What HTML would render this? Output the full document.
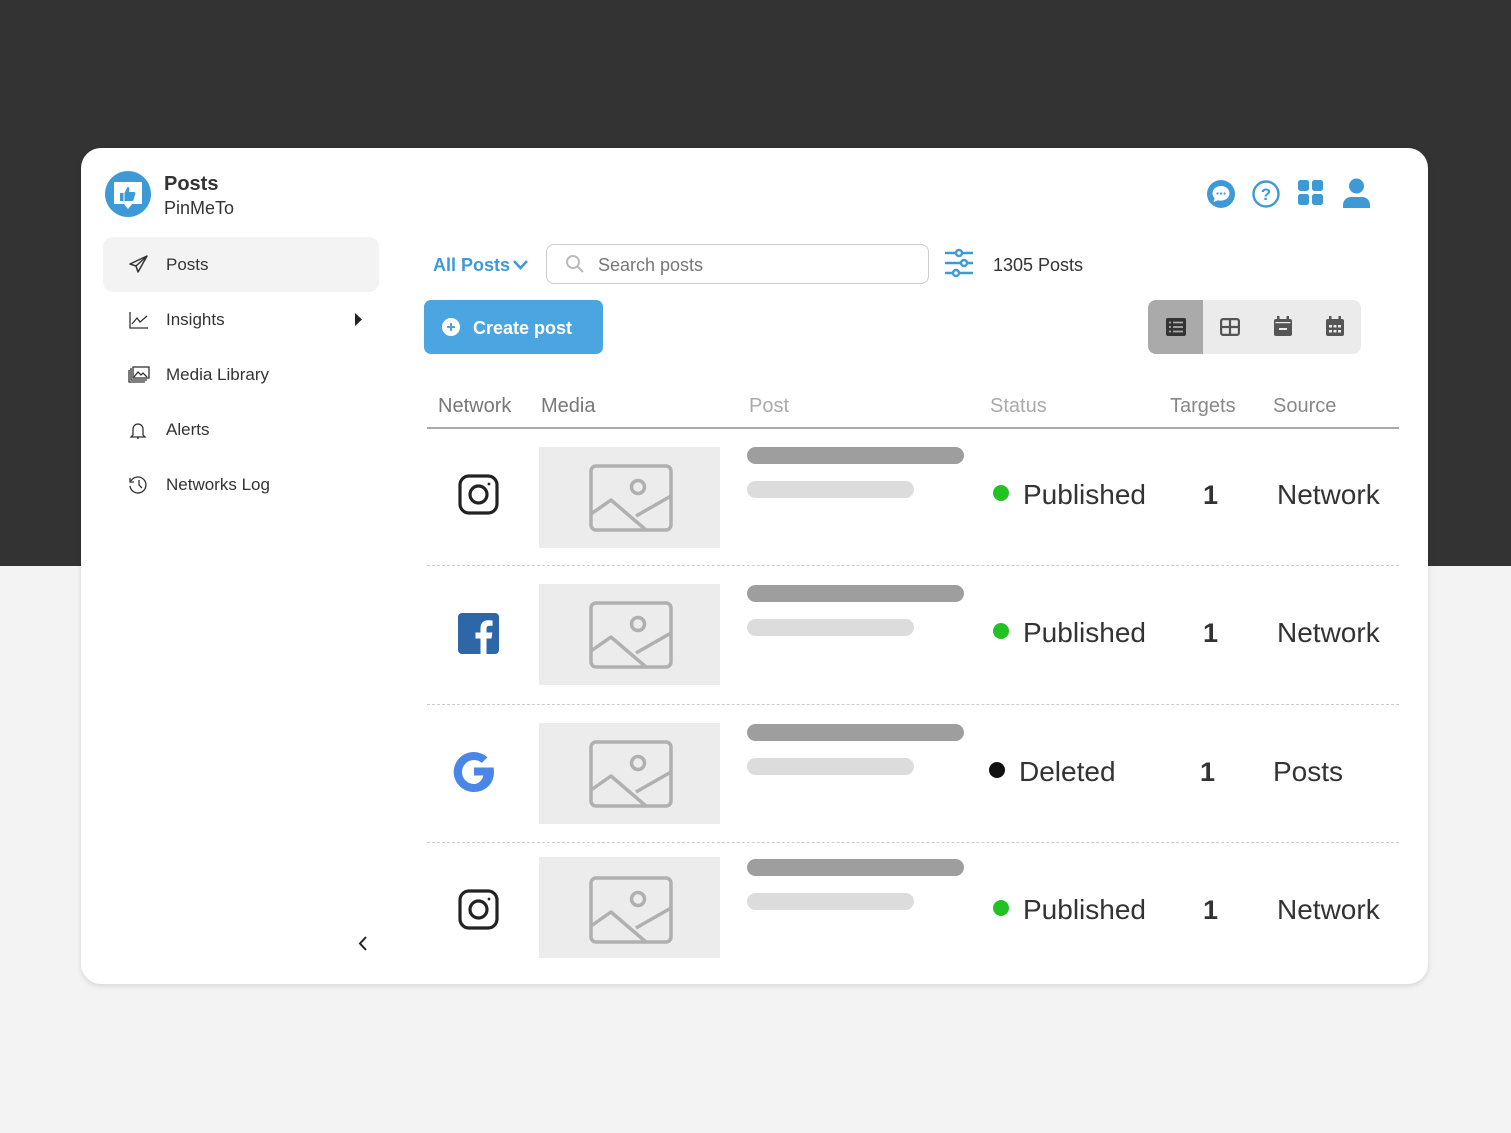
<!DOCTYPE html>
<html><head><meta charset="utf-8"><style>
*{margin:0;padding:0;box-sizing:border-box}
body{width:1511px;height:1133px;background:#f3f3f3;position:relative;overflow:hidden;font-family:"Liberation Sans",sans-serif;color:#333}
.top{position:absolute;left:0;top:0;width:1511px;height:566px;background:#333}
.card{position:absolute;left:81px;top:148px;width:1347px;height:836px;background:#fff;border-radius:20px;box-shadow:0 2px 6px rgba(0,0,0,.12)}
.a{position:absolute}
.nav{position:absolute;left:166px;font-size:17px;color:#333}
.navic{position:absolute;left:128px}
.th{position:absolute;top:395px;font-size:20px}
.img{position:absolute;left:539px;width:181px;height:101px;background:#ececec}
.b1{position:absolute;left:747px;width:217px;height:17px;border-radius:9px;background:#9e9e9e}
.b2{position:absolute;left:747px;width:167px;height:17px;border-radius:9px;background:#dcdcdc}
.st{position:absolute;font-size:28px;color:#333}
.dot{display:inline-block;width:16px;height:16px;border-radius:50%;background:#22c222;margin-right:14px;vertical-align:3px}
.one{position:absolute;left:1203px;font-size:27px;font-weight:bold;color:#333}
.src{position:absolute;font-size:28px;color:#333}
.dash{position:absolute;left:427px;width:972px;border-top:1.5px dashed #ccc}
</style></head><body>
<div class="top"></div>
<div class="card"></div>

<!-- logo -->
<svg class="a" style="left:105px;top:171px" width="46" height="46" viewBox="0 0 46 46"><circle cx="23" cy="23" r="23" fill="#3d9ad6"/><path d="M9 11h28v22H27l-4 5-4-5H9z" fill="#fff"/><path d="M15 22h3.5v8H15zM19.5 22l3-6c1.5 0 2 1 1.8 2.5L24 21H29c1 0 1.6 1 1.3 2l-1.8 6c-.2.6-.8 1-1.4 1h-7.6z" fill="#3d9ad6"/></svg>
<div class="a" style="left:164px;top:173px;font-size:20px;font-weight:bold;color:#333">Posts</div>
<div class="a" style="left:164px;top:198px;font-size:18px;color:#333">PinMeTo</div>

<!-- sidebar -->
<div class="a" style="left:103px;top:237px;width:276px;height:55px;background:#f3f3f3;border-radius:10px"></div>
<svg class="navic" style="top:254px" width="22" height="20" viewBox="0 0 22 20" fill="none" stroke="#333" stroke-width="1.5" stroke-linejoin="round"><path d="M19 2L2 10l6 2 2 6z M8 12L19 2"/></svg>
<div class="nav" style="top:255px">Posts</div>
<svg class="navic" style="top:310px" width="22" height="20" viewBox="0 0 22 20" fill="none" stroke="#333" stroke-width="1.3"><path d="M2 2v16h18M4 14l5-6 3 4 7-6"/></svg>
<div class="nav" style="top:310px">Insights</div>
<svg class="a" style="left:354px;top:313px" width="8" height="13" viewBox="0 0 8 13"><path d="M1 0l7 6.5L1 13z" fill="#222"/></svg>
<svg class="navic" style="top:365px" width="22" height="20" viewBox="0 0 22 20" fill="none" stroke="#333" stroke-width="1.3"><path d="M1 5v12h16"/><path d="M3 3v12h16"/><rect x="5" y="2" width="16" height="11"/><path d="M6 12l4-5 3 3 2-2 4 4"/></svg>
<div class="nav" style="top:365px">Media Library</div>
<svg class="navic" style="top:420px" width="22" height="20" viewBox="0 0 22 20" fill="none" stroke="#333" stroke-width="1.3"><path d="M5 15V9a5 5 0 0110 0v6l2 2H3z M9 18h2"/></svg>
<div class="nav" style="top:420px">Alerts</div>
<svg class="navic" style="top:475px" width="22" height="20" viewBox="0 0 22 20" fill="none" stroke="#333" stroke-width="1.3"><path d="M3 6a8 8 0 11-1 5"/><path d="M2 3v4h4M11 5v5l3 3"/></svg>
<div class="nav" style="top:475px">Networks Log</div>
<svg class="a" style="left:357px;top:936px" width="12" height="15" viewBox="0 0 12 15"><path d="M9 1L3 7.5 9 14" fill="none" stroke="#222" stroke-width="2"/></svg>

<!-- top right icons -->
<svg class="a" style="left:1207px;top:180px" width="28" height="28" viewBox="0 0 28 28"><circle cx="14" cy="14" r="14" fill="#3d9ad6"/><path d="M14 6c5 0 8.5 3.3 8.5 7.3S19 20.6 14 20.6c-1 0-2-.1-3-.4L6.5 22l1.2-3.6C6.3 17 5.5 15.3 5.5 13.3 5.5 9.3 9 6 14 6z" fill="#fff"/><circle cx="10.5" cy="13.5" r="1.1" fill="#3d9ad6"/><circle cx="14" cy="13.5" r="1.1" fill="#3d9ad6"/><circle cx="17.5" cy="13.5" r="1.1" fill="#3d9ad6"/></svg>
<svg class="a" style="left:1252px;top:180px" width="28" height="28" viewBox="0 0 28 28"><circle cx="14" cy="14" r="12.5" fill="none" stroke="#3d9ad6" stroke-width="2.4"/><text x="14" y="20" text-anchor="middle" font-family="Liberation Sans" font-weight="bold" font-size="17" fill="#3d9ad6">?</text></svg>
<svg class="a" style="left:1298px;top:180px" width="26" height="26" viewBox="0 0 26 26" fill="#3d9ad6"><rect x="0" y="0" width="11" height="11" rx="2.5"/><rect x="14" y="0" width="11" height="11" rx="2.5"/><rect x="0" y="14" width="11" height="11" rx="2.5"/><rect x="14" y="14" width="11" height="11" rx="2.5"/></svg>
<svg class="a" style="left:1343px;top:178px" width="27" height="30" viewBox="0 0 27 30" fill="#3d9ad6"><circle cx="13.5" cy="8" r="7.5"/><path d="M0 30v-3c0-5 4-8 8-8h11c4 0 8 3 8 8v3z"/></svg>

<!-- toolbar -->
<div class="a" style="left:433px;top:255px;font-size:18px;font-weight:bold;color:#3d9ad6">All Posts</div>
<svg class="a" style="left:512px;top:259px" width="17" height="12" viewBox="0 0 17 12"><path d="M2 2l6.5 7L15 2" fill="none" stroke="#3d9ad6" stroke-width="2.5"/></svg>
<div class="a" style="left:546px;top:244px;width:383px;height:40px;border:1.5px solid #ccc;border-radius:8px"></div>
<svg class="a" style="left:565px;top:254px" width="20" height="20" viewBox="0 0 20 20" fill="none" stroke="#bbb" stroke-width="2"><circle cx="8" cy="8" r="6"/><path d="M12.5 12.5L18 18"/></svg>
<div class="a" style="left:598px;top:255px;font-size:18px;color:#777">Search posts</div>
<svg class="a" style="left:944px;top:248px" width="30" height="30" viewBox="0 0 30 30" fill="none" stroke="#3d9ad6" stroke-width="2.4"><path d="M1 5h28M1 15h28M1 25h28"/><circle cx="15" cy="5" r="3" fill="#fff"/><circle cx="20" cy="15" r="3" fill="#fff"/><circle cx="12" cy="25" r="3" fill="#fff"/></svg>
<div class="a" style="left:993px;top:255px;font-size:18px;color:#333">1305 Posts</div>

<div class="a" style="left:424px;top:300px;width:179px;height:54px;background:#4aa5e0;border-radius:7px"></div>
<svg class="a" style="left:442px;top:318px" width="18" height="18" viewBox="0 0 18 18"><circle cx="9" cy="9" r="9" fill="#fff"/><path d="M9 5v8M5 9h8" stroke="#4aa5e0" stroke-width="2"/></svg>
<div class="a" style="left:473px;top:318px;font-size:18px;font-weight:bold;color:#fff">Create post</div>

<div class="a" style="left:1148px;top:300px;width:213px;height:54px;background:#ebebeb;border-radius:8px;overflow:hidden"><div style="width:55px;height:54px;background:#aaa"></div></div>
<svg class="a" style="left:1166px;top:318px" width="20" height="18" viewBox="0 0 20 18"><rect width="20" height="18" rx="2" fill="#333"/><path d="M3 4.5h2M7 4.5h10M3 9h2M7 9h10M3 13.5h2M7 13.5h10" stroke="#aaa" stroke-width="1.8"/></svg>
<svg class="a" style="left:1220px;top:318px" width="20" height="18" viewBox="0 0 20 18" fill="none" stroke="#555" stroke-width="2.2"><rect x="1.1" y="1.1" width="17.8" height="15.8" rx="2"/><path d="M10 1v16M1 9h18"/></svg>
<svg class="a" style="left:1274px;top:316px" width="18" height="20" viewBox="0 0 18 20"><rect x="0" y="3" width="18" height="17" rx="2" fill="#555"/><rect x="3" y="0" width="2.5" height="5" fill="#555"/><rect x="12.5" y="0" width="2.5" height="5" fill="#555"/><rect x="1.5" y="6" width="15" height="1.2" fill="#ebebeb"/><rect x="5" y="12" width="8" height="2" fill="#ebebeb"/></svg>
<svg class="a" style="left:1326px;top:316px" width="18" height="20" viewBox="0 0 18 20"><rect x="0" y="3" width="18" height="17" rx="2" fill="#555"/><rect x="3" y="0" width="2.5" height="5" fill="#555"/><rect x="12.5" y="0" width="2.5" height="5" fill="#555"/><g fill="#ebebeb"><rect x="3" y="9" width="3" height="2.5"/><rect x="7.5" y="9" width="3" height="2.5"/><rect x="12" y="9" width="3" height="2.5"/><rect x="3" y="14" width="3" height="2.5"/><rect x="7.5" y="14" width="3" height="2.5"/><rect x="12" y="14" width="3" height="2.5"/></g></svg>

<!-- table header -->
<div class="th" style="left:438px;color:#777">Network</div>
<div class="th" style="left:541px;color:#777">Media</div>
<div class="th" style="left:749px;color:#aaa">Post</div>
<div class="th" style="left:990px;color:#aaa">Status</div>
<div class="th" style="left:1170px;color:#888">Targets</div>
<div class="th" style="left:1273px;color:#888">Source</div>
<div class="a" style="left:427px;top:427px;width:972px;height:1.5px;background:#aaa"></div>
<div class="dash" style="top:565px"></div>
<div class="dash" style="top:704px"></div>
<div class="dash" style="top:842px"></div>

<!-- network icons -->
<svg class="a" style="left:458px;top:474px" width="41" height="41" viewBox="0 0 41 41" fill="none" stroke="#222" stroke-width="3.2"><rect x="2" y="2" width="37" height="37" rx="9"/><circle cx="20.5" cy="20.5" r="8.5"/><circle cx="31" cy="10" r="1.4" fill="#222" stroke="none"/></svg>
<svg class="a" style="left:458px;top:613px" width="41" height="41" viewBox="0 0 41 41"><rect width="41" height="41" rx="4" fill="#2d67a8"/><path d="M28.5 41V25.5h5l.8-6h-5.8v-3.8c0-1.7.5-2.9 3-2.9h3.1V7.5c-.6-.1-2.4-.2-4.5-.2-4.5 0-7.6 2.7-7.6 7.8v4.4h-5v6h5V41z" fill="#fff"/></svg>
<svg class="a" style="left:451px;top:749px" width="46" height="46" viewBox="0 0 46 46"><path d="M39 18.5H23v8h9.5C31 31.5 27.5 35 23 35a12 12 0 110-24c3 0 5.7 1.1 7.8 3l5.6-5.6A20 20 0 1023 43c11 0 20-8 20-20 0-1.5-.1-3-.4-4.5z" fill="#4a86e8"/></svg>
<svg class="a" style="left:458px;top:889px" width="41" height="41" viewBox="0 0 41 41" fill="none" stroke="#222" stroke-width="3.2"><rect x="2" y="2" width="37" height="37" rx="9"/><circle cx="20.5" cy="20.5" r="8.5"/><circle cx="31" cy="10" r="1.4" fill="#222" stroke="none"/></svg>

<!-- rows -->
<div class="img" style="top:447px"></div>
<div class="img" style="top:584px"></div>
<div class="img" style="top:723px"></div>
<div class="img" style="top:857px"></div>
<svg class="a" style="left:589px;top:464px" width="84" height="68" viewBox="0 0 84 68" fill="none" stroke="#b0b0b0" stroke-width="3.5" stroke-linejoin="round"><rect x="2" y="2" width="80" height="64" rx="5"/><circle cx="49" cy="23" r="6.5"/><path d="M2 50l20-14 35 30M47 52l35-20"/></svg>
<svg class="a" style="left:589px;top:601px" width="84" height="68" viewBox="0 0 84 68" fill="none" stroke="#b0b0b0" stroke-width="3.5" stroke-linejoin="round"><rect x="2" y="2" width="80" height="64" rx="5"/><circle cx="49" cy="23" r="6.5"/><path d="M2 50l20-14 35 30M47 52l35-20"/></svg>
<svg class="a" style="left:589px;top:740px" width="84" height="68" viewBox="0 0 84 68" fill="none" stroke="#b0b0b0" stroke-width="3.5" stroke-linejoin="round"><rect x="2" y="2" width="80" height="64" rx="5"/><circle cx="49" cy="23" r="6.5"/><path d="M2 50l20-14 35 30M47 52l35-20"/></svg>
<svg class="a" style="left:589px;top:876px" width="84" height="68" viewBox="0 0 84 68" fill="none" stroke="#b0b0b0" stroke-width="3.5" stroke-linejoin="round"><rect x="2" y="2" width="80" height="64" rx="5"/><circle cx="49" cy="23" r="6.5"/><path d="M2 50l20-14 35 30M47 52l35-20"/></svg>

<div class="b1" style="top:447px"></div><div class="b2" style="top:481px"></div>
<div class="b1" style="top:585px"></div><div class="b2" style="top:619px"></div>
<div class="b1" style="top:724px"></div><div class="b2" style="top:758px"></div>
<div class="b1" style="top:859px"></div><div class="b2" style="top:893px"></div>

<div class="st" style="left:993px;top:479px"><span class="dot"></span>Published</div>
<div class="st" style="left:993px;top:617px"><span class="dot"></span>Published</div>
<div class="st" style="left:989px;top:756px"><span class="dot" style="background:#111"></span>Deleted</div>
<div class="st" style="left:993px;top:894px"><span class="dot"></span>Published</div>

<div class="one" style="top:480px">1</div>
<div class="one" style="top:618px">1</div>
<div class="one" style="top:757px;left:1200px">1</div>
<div class="one" style="top:895px">1</div>

<div class="src" style="left:1277px;top:479px">Network</div>
<div class="src" style="left:1277px;top:617px">Network</div>
<div class="src" style="left:1273px;top:756px">Posts</div>
<div class="src" style="left:1277px;top:894px">Network</div>
</body></html>
